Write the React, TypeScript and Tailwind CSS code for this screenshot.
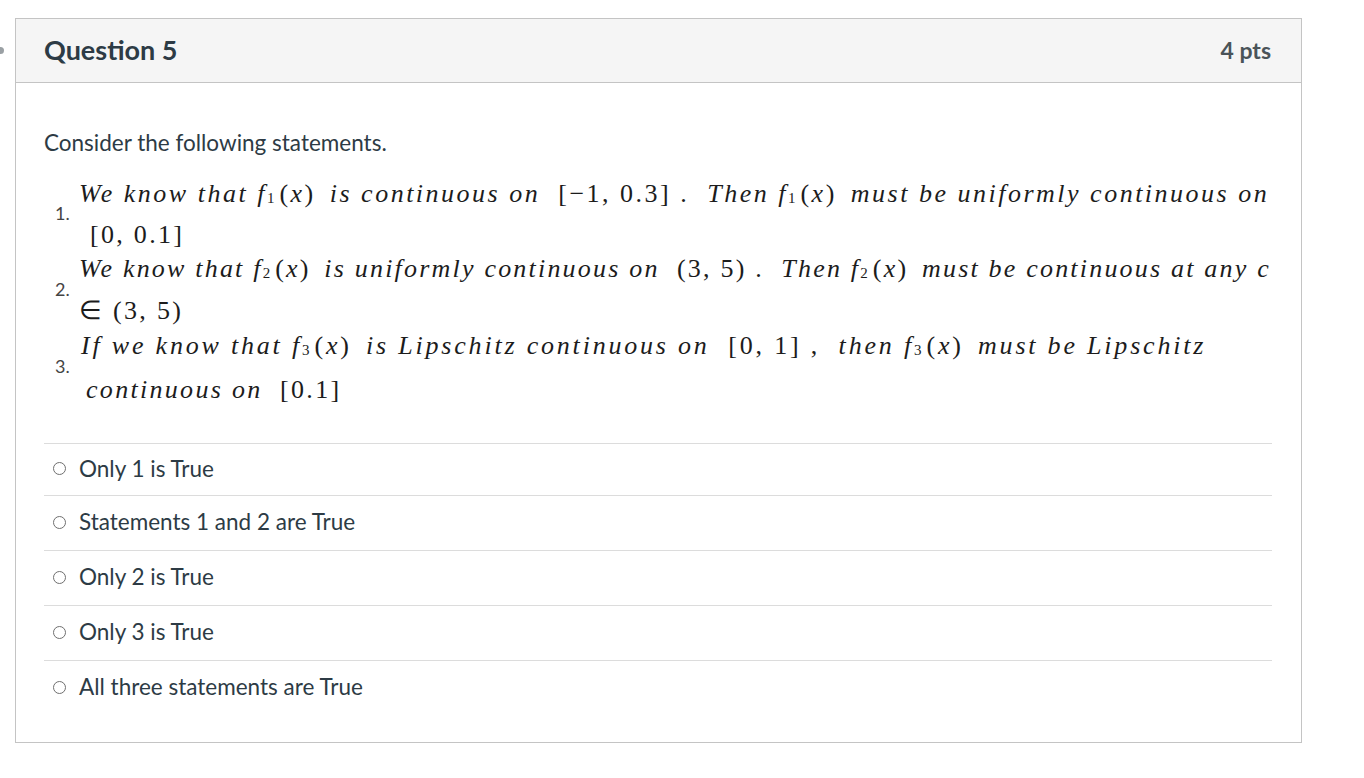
import React from 'react';

const serif = "font-['Liberation_Serif','Times_New_Roman',serif]";
const lato = "font-['Lato','Open_Sans',sans-serif]";

// math italic run
function I({ children }: { children: React.ReactNode }) {
    return <span className="italic">{children}</span>;
}

// upright run
function R({ children }: { children: React.ReactNode }) {
    return <span className="not-italic">{children}</span>;
}

function F({ n }: { n: string }) {
    return (
        <span className="italic">
            f<sub className="not-italic text-[15px] tracking-normal relative top-[1px]">{n}</sub>
        </span>
    );
}

function X() {
    return (
        <span className="mx-[5px]">
            <R>(</R>
            <I>x</I>
            <R>)</R>
        </span>
    );
}

function Marker({ n }: { n: number }) {
    return (
        <span className={`${lato} shrink-0 w-[24px] pl-[11px] self-center text-[18px] tracking-normal text-[#444] box-content`}>
            {n}.
        </span>
    );
}

const options = [
    'Only 1 is True',
    'Statements 1 and 2 are True',
    'Only 2 is True',
    'Only 3 is True',
    'All three statements are True',
];

export default function App() {
    return (
        <div className="min-h-screen bg-white pt-[18px] flex items-start">
            {/* clipped marker at far left */}
            <div className="w-[4px] h-[7px] mt-[29px] rounded-r-full bg-[#9aa0a4]" />

            <div className="ml-[11px] w-[1287px] border border-[#c4c4c4] bg-white">
                {/* Header */}
                <div className="h-[64px] bg-[#f5f5f5] border-b border-[#c4c4c4] flex items-center justify-between pl-[28px] pr-[30px]">
                    <h2 className={`${lato} text-[27px] font-bold text-[#2d3b45]`}>Question 5</h2>
                    <span className={`${lato} text-[23px] font-bold text-[#4a5358]`}>4 pts</span>
                </div>

                {/* Body */}
                <div className="pl-[28px] pr-[29px] pt-[45px] pb-[27px]">
                    <p className={`${lato} text-[22.5px] leading-[30px] text-[#2d3b45]`}>
                        Consider the following statements.
                    </p>

                    <ol className={`mt-[18px] text-[#1c1c1c] ${serif} text-[26px] tracking-[2.3px]`}>
                        {/* 1 */}
                        <li className="flex">
                            <Marker n={1} />
                            <div>
                                <div className="h-[34px] flex items-center whitespace-pre tracking-[2.5px]">
                                    <I>We know that </I>
                                    <F n="1" />
                                    <X />
                                    <I> is continuous on </I>
                                    <R> [−1, 0.3] . </R>
                                    <I> Then </I>
                                    <F n="1" />
                                    <X />
                                    <I> must be uniformly continuous on</I>
                                </div>
                                <div className="h-[34px] mt-[7px] flex items-center pl-[11px]">
                                    <R>[0, 0.1]</R>
                                </div>
                            </div>
                        </li>

                        {/* 2 */}
                        <li className="flex">
                            <Marker n={2} />
                            <div>
                                <div className="h-[34px] flex items-center whitespace-pre tracking-[2.2px]">
                                    <I>We know that </I>
                                    <F n="2" />
                                    <X />
                                    <I> is uniformly continuous on </I>
                                    <R> (3, 5) . </R>
                                    <I> Then </I>
                                    <F n="2" />
                                    <X />
                                    <I> must be continuous at any c</I>
                                </div>
                                <div className="h-[34px] mt-[8px] flex items-center">
                                    <R>∈ (3, 5)</R>
                                </div>
                            </div>
                        </li>

                        {/* 3 */}
                        <li className="flex">
                            <Marker n={3} />
                            <div>
                                <div className="h-[34px] mt-[1px] flex items-center whitespace-pre pl-[2px] tracking-[2.8px]">
                                    <I>If we know that </I>
                                    <F n="3" />
                                    <X />
                                    <I> is Lipschitz continuous on </I>
                                    <R> [0, 1] , </R>
                                    <I> then </I>
                                    <F n="3" />
                                    <X />
                                    <I> must be Lipschitz</I>
                                </div>
                                <div className="h-[34px] mt-[10px] flex items-center pl-[7px] whitespace-pre">
                                    <I>continuous on </I>
                                    <R> [0.1]</R>
                                </div>
                            </div>
                        </li>
                    </ol>

                    {/* Answers */}
                    <div className="mt-[37px]">
                        {options.map((o, i) => (
                            <div
                                key={o}
                                className={`border-t border-[#dcdcdc] flex items-center pl-[9px] pb-[2px] ${i === 0 ? 'h-[52px]' : 'h-[55px]'}`}
                            >
                                <span className="w-[13px] h-[13px] rounded-full border border-[#6f6f6f] bg-white" />
                                <span className={`${lato} ml-[13px] text-[22.5px] text-[#2d3b45]`}>{o}</span>
                            </div>
                        ))}
                    </div>
                </div>
            </div>
        </div>
    );
}
